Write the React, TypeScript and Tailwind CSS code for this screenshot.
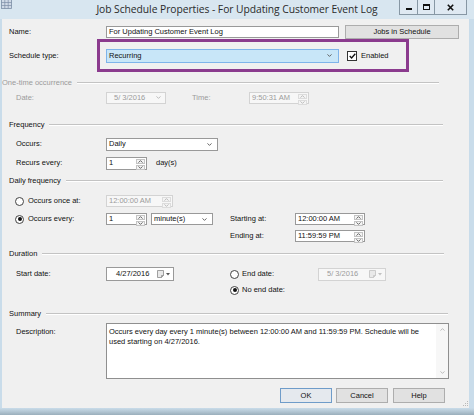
import React from "react";

const GRAY = "text-[#9b9b9b]";

function Chev({ up, dim }: { up?: boolean; dim?: boolean }) {
  return (
    <svg width="5" height="3" viewBox="0 0 5 3" className="block">
      <path
        d={up ? "M0.5 2.6 L2.5 0.6 L4.5 2.6" : "M0.5 0.4 L2.5 2.4 L4.5 0.4"}
        fill="none"
        stroke={dim ? "#b5b5b5" : "#555"}
        strokeWidth="0.9"
      />
    </svg>
  );
}

function Spin({ dim }: { dim?: boolean }) {
  return (
    <div className="ml-auto flex h-full w-[10px] flex-col gap-[1px] py-[1px] pr-[1px]">
      <div className={`flex flex-1 items-center justify-center border ${dim ? "border-[#dcdcdc]" : "border-[#c4c4c4]"} bg-[#f4f4f4]`}>
        <Chev up dim={dim} />
      </div>
      <div className={`flex flex-1 items-center justify-center border ${dim ? "border-[#dcdcdc]" : "border-[#c4c4c4]"} bg-[#f4f4f4]`}>
        <Chev dim={dim} />
      </div>
    </div>
  );
}

function Calendar({ dim }: { dim?: boolean }) {
  const c = dim ? "#c2c2c2" : "#8a8a8a";
  return (
    <div className="ml-auto mr-[3px] flex items-center gap-[2px]">
      <svg width="7" height="8" viewBox="0 0 7 8" className="block">
        <path d="M0.5 0.5 H6.5 V5.5 L4.5 7.5 H0.5 Z" fill="#e9e9e9" stroke={c} strokeWidth="0.8" />
        <path d="M4.5 7.5 V5.5 H6.5" fill="none" stroke={c} strokeWidth="0.8" />
      </svg>
      <svg width="4" height="3" viewBox="0 0 4 3" className="block">
        <path d="M0 0 H4 L2 2.5 Z" fill={dim ? "#c2c2c2" : "#555"} />
      </svg>
    </div>
  );
}

function Radio({ on }: { on?: boolean }) {
  return (
    <div className="flex h-[9px] w-[9px] items-center justify-center rounded-full border border-[#444] bg-white">
      {on && <div className="h-[4px] w-[4px] rounded-full bg-[#111]" />}
    </div>
  );
}

function Header({ label, pr, dim, pl = "pl-[7px]", mt }: { label: string; pr: string; dim?: boolean; pl?: string; mt: string }) {
  return (
    <div className={`${mt} flex h-[12px] items-center ${pl} ${pr}`}>
      <span className={dim ? GRAY : "text-[#111]"}>{label}</span>
      <div className="ml-[5px] h-[2px] flex-1 border-t border-b border-t-[#c3c3c3] border-b-white" />
    </div>
  );
}

function Btn({ label, w, def, h = "h-[15px]" }: { label: string; w: string; def?: boolean; h?: string }) {
  return (
    <div
      className={`flex ${w} ${h} items-center justify-center border ${def ? "border-[#6f9cc9] bg-[#e5e9ee]" : "border-[#adadad] bg-[#e1e1e1]"} text-[#111]`}
    >
      {label}
    </div>
  );
}

export default function App() {
  return (
    <div className="flex h-[415px] w-[474px] flex-col overflow-hidden bg-[#c9dcea] font-['Liberation_Sans',Arial,sans-serif] text-[7.5px] leading-none text-[#111]">
      {/* Title bar */}
      <div className="grid h-[19px] grid-cols-[1fr_auto_1fr] bg-[#d8e6f0]">
        <div className="flex items-start pl-[1px]">
          <svg width="11" height="9" viewBox="0 0 11 9" className="block">
            <rect x="0.5" y="-1" width="10" height="9.5" fill="#cfd9e6" stroke="#7c8ea6" strokeWidth="0.8" />
            <path d="M0.5 2.5 H10.5 M0.5 5.5 H10.5 M3.8 -1 V8.5 M7.2 -1 V8.5" stroke="#7c8ea6" strokeWidth="0.7" />
          </svg>
        </div>
        <div className="flex items-center font-['Open_Sans',sans-serif] text-[10.3px] tracking-[-0.05px] text-[#2a2a2a]">
          Job Schedule Properties - For Updating Customer Event Log
        </div>
        <div className="flex items-start justify-end pr-[7px]">
          <div className="flex h-[15px] border-x border-b border-[#8797a4] bg-[#dfe9f2]">
            <div className="flex w-[17px] items-end justify-center pb-[4px]">
              <div className="h-[2px] w-[6px] bg-[#111]" />
            </div>
            <div className="flex w-[17px] items-center justify-center border-l border-[#8797a4]">
              <div className="h-[6px] w-[7px] border border-t-2 border-[#111]" />
            </div>
            <div className="flex w-[32px] items-center justify-center border-l border-[#8797a4]">
              <svg width="7" height="7" viewBox="0 0 7 7" className="block">
                <path d="M0.8 0.8 L6.2 6.2 M6.2 0.8 L0.8 6.2" stroke="#111" strokeWidth="1.6" />
              </svg>
            </div>
          </div>
        </div>
      </div>

      {/* Client area */}
      <div className="relative ml-[2px] mr-[5px] flex h-[389px] flex-col bg-[#f0f0f0]">
        {/* Name */}
        <div className="mt-[5px] flex h-[15px] items-center">
          <div className="w-[104px] pl-[7px]">Name:</div>
          <div className="flex h-[12px] w-[233px] items-center border border-[#999] bg-white pl-[2px]">
            For Updating Customer Event Log
          </div>
          <div className="ml-[6px]">
            <Btn label="Jobs in Schedule" w="w-[114px]" h="h-[14px]" />
          </div>
        </div>

        {/* Schedule type */}
        <div className="flex h-[33px] items-center">
          <div className="w-[95px] pl-[7px]">Schedule type:</div>
          <div className="flex h-[33px] w-[312px] items-center border-[3px] border-[#8b3b8e] pl-[6px]">
            <div className="flex h-[14px] w-[233px] items-center border border-[#7eb4ea] bg-[#c8e6f8] pl-[2px] pr-[6px]">
              <span>Recurring</span>
              <div className="ml-auto">
                <Chev />
              </div>
            </div>
            <div className="ml-[8px] flex h-[10px] w-[10px] items-center justify-center border border-[#333] bg-white">
              <svg width="7" height="6" viewBox="0 0 7 6" className="block">
                <path d="M0.7 3 L2.6 5 L6.3 0.8" fill="none" stroke="#111" strokeWidth="1.3" />
              </svg>
            </div>
            <span className="ml-[4px]">Enabled</span>
          </div>
        </div>

        {/* One-time occurrence */}
        <Header label="One-time occurrence" mt="mt-[5px]" pl="pl-0" pr="pr-[30px]" dim />
        <div className={`mt-[2px] flex h-[13px] items-center ${GRAY}`}>
          <div className="w-[104px] pl-[14px]">Date:</div>
          <div className="flex h-[12px] w-[60px] items-center border border-[#d3d3d3] bg-[#f7f7f7] pl-[7px] pr-[4px]">
            <span>5/ 3/2016</span>
            <div className="ml-auto">
              <Chev dim />
            </div>
          </div>
          <div className="ml-[26px] w-[57px]">Time:</div>
          <div className="flex h-[12px] w-[60px] items-center border border-[#d3d3d3] bg-[#f7f7f7] pl-[2px]">
            <span>9:50:31 AM</span>
            <Spin dim />
          </div>
        </div>

        {/* Frequency */}
        <Header label="Frequency" mt="mt-[15px]" pr="pr-[26px]" />
        <div className="mt-[6px] flex h-[14px] items-center">
          <div className="w-[104px] pl-[14px]">Occurs:</div>
          <div className="flex h-[13px] w-[112px] items-center border border-[#999] bg-white pl-[2px] pr-[5px]">
            <span>Daily</span>
            <div className="ml-auto">
              <Chev />
            </div>
          </div>
        </div>
        <div className="mt-[5px] flex h-[14px] items-center">
          <div className="w-[104px] pl-[14px]">Recurs every:</div>
          <div className="flex h-[13px] w-[41px] items-center border border-[#999] bg-white pl-[2px]">
            <span>1</span>
            <Spin />
          </div>
          <span className="ml-[9px]">day(s)</span>
        </div>

        {/* Daily frequency */}
        <Header label="Daily frequency" mt="mt-[5px]" pr="pr-[26px]" />
        <div className="mt-[8px] flex h-[12px] items-center">
          <div className="flex w-[104px] items-center pl-[13px]">
            <Radio />
            <span className="ml-[4px]">Occurs once at:</span>
          </div>
          <div className={`flex h-[12px] w-[67px] items-center border border-[#d3d3d3] bg-[#f7f7f7] pl-[2px] ${GRAY}`}>
            <span>12:00:00 AM</span>
            <Spin dim />
          </div>
        </div>
        <div className="mt-[6px] flex h-[12px] items-center">
          <div className="flex w-[104px] items-center pl-[13px]">
            <Radio on />
            <span className="ml-[4px]">Occurs every:</span>
          </div>
          <div className="flex h-[12px] w-[41px] items-center border border-[#999] bg-white pl-[2px]">
            <span>1</span>
            <Spin />
          </div>
          <div className="ml-[4px] flex h-[12px] w-[62px] items-center border border-[#999] bg-white pl-[2px] pr-[5px]">
            <span>minute(s)</span>
            <div className="ml-auto">
              <Chev />
            </div>
          </div>
          <div className="ml-[17px] w-[65px]">Starting at:</div>
          <div className="flex h-[12px] w-[70px] items-center border border-[#999] bg-white pl-[2px]">
            <span>12:00:00 AM</span>
            <Spin />
          </div>
        </div>
        <div className="mt-[5px] flex h-[12px] items-center pl-[228px]">
          <div className="w-[65px]">Ending at:</div>
          <div className="flex h-[12px] w-[70px] items-center border border-[#999] bg-white pl-[2px]">
            <span>11:59:59 PM</span>
            <Spin />
          </div>
        </div>

        {/* Duration */}
        <Header label="Duration" mt="mt-[6px]" pr="pr-[25px]" />
        <div className="mt-[7px] flex h-[14px] items-center">
          <div className="w-[104px] pl-[14px]">Start date:</div>
          <div className="flex h-[14px] w-[68px] items-center border border-[#999] bg-white pl-[9px]">
            <span>4/27/2016</span>
            <Calendar />
          </div>
          <div className="ml-[56px] flex items-center">
            <Radio />
            <span className="ml-[3px] w-[76px]">End date:</span>
          </div>
          <div className={`flex h-[13px] w-[68px] items-center border border-[#d3d3d3] bg-[#f7f7f7] pl-[8px] ${GRAY}`}>
            <span>5/ 3/2016</span>
            <Calendar dim />
          </div>
        </div>
        <div className="mt-[3px] flex h-[12px] items-center pl-[228px]">
          <Radio on />
          <span className="ml-[3px]">No end date:</span>
        </div>

        {/* Summary */}
        <Header label="Summary" mt="mt-[12px]" pr="pr-[21px]" />
        <div className="mt-[3px] flex h-[56px]">
          <div className="w-[104px] pl-[14px] pt-[5px]">Description:</div>
          <div className="flex h-[56px] w-[343px] border border-[#8f8f8f] bg-white">
            <div className="flex-1 pl-[2px] pt-[3px] leading-[10px]">
              <div className="whitespace-nowrap">
                Occurs every day every 1 minute(s) between 12:00:00 AM and 11:59:59 PM. Schedule will be
              </div>
              <div className="whitespace-nowrap">used starting on 4/27/2016.</div>
            </div>
            <div className="flex w-[12px] flex-col items-center justify-between bg-[#f7f7f7] py-[4px]">
              <Chev up dim />
              <Chev dim />
            </div>
          </div>
        </div>

        {/* Buttons */}
        <div className="mt-[9px] flex h-[15px] justify-end pr-[24px]">
          <Btn label="OK" w="w-[52px]" def />
          <div className="ml-[4px]">
            <Btn label="Cancel" w="w-[52px]" />
          </div>
          <div className="ml-[5px]">
            <Btn label="Help" w="w-[52px]" />
          </div>
        </div>

        {/* size grip */}
        <div className="absolute bottom-[2px] right-[1px] grid grid-cols-3 gap-[1px]">
          <div />
          <div />
          <div className="h-[1px] w-[1px] bg-[#b9b9b9]" />
          <div />
          <div className="h-[1px] w-[1px] bg-[#b9b9b9]" />
          <div className="h-[1px] w-[1px] bg-[#b9b9b9]" />
          <div className="h-[1px] w-[1px] bg-[#b9b9b9]" />
          <div className="h-[1px] w-[1px] bg-[#b9b9b9]" />
          <div className="h-[1px] w-[1px] bg-[#b9b9b9]" />
        </div>
      </div>

      {/* Bottom frame */}
      <div className="flex-1 bg-gradient-to-b from-[#c9dcea] via-[#b3c6d3] to-[#9aaebb]" />
    </div>
  );
}
